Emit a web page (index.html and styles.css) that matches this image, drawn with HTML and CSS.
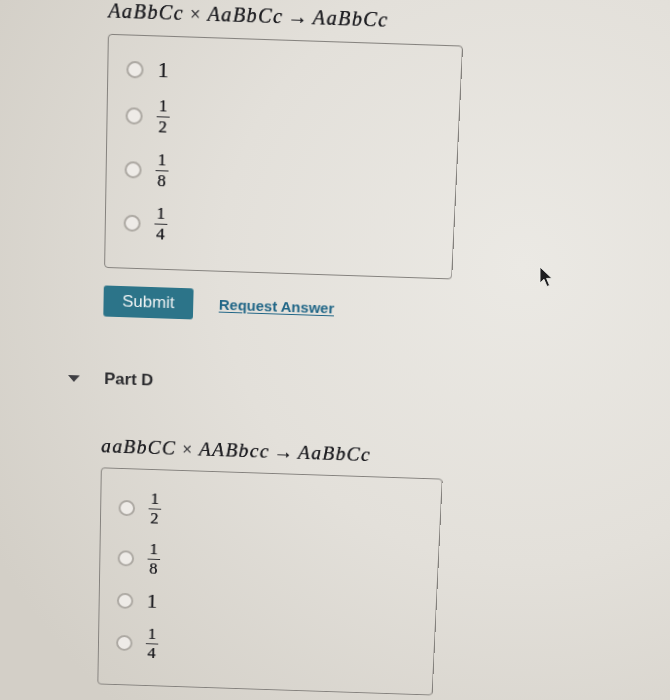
FILE: index.html
```html
<!DOCTYPE html>
<html lang="en">
  <head>
    <meta charset="utf-8" />
    <meta name="viewport" content="width=device-width, initial-scale=1.0" />
    <title>Part C / Part D</title>
    <link rel="stylesheet" href="styles.css">
  </head>
  <body>
    <div class="screen">

      <!-- Part C (open, header scrolled away) -->
      <div class="question">
        <p class="cross"><span class="gt">AaBbCc</span><span class="op">×</span><span class="gt">AaBbCc</span><span class="arrow">→</span><span class="gt">AaBbCc</span></p>

        <div class="choices">
          <label class="choice">
            <input type="radio" name="part_c" class="radio">
            <span class="num">1</span>
          </label>
          <label class="choice tall">
            <input type="radio" name="part_c" class="radio">
            <span class="frac"><span class="top">1</span><span class="bot">2</span></span>
          </label>
          <label class="choice tall">
            <input type="radio" name="part_c" class="radio">
            <span class="frac"><span class="top">1</span><span class="bot">8</span></span>
          </label>
          <label class="choice tall">
            <input type="radio" name="part_c" class="radio">
            <span class="frac"><span class="top">1</span><span class="bot">4</span></span>
          </label>
        </div>

        <div class="actions">
          <button class="submit" type="button">Submit</button>
          <a class="request" href="#">Request Answer</a>
        </div>
      </div>

      <!-- Part D -->
      <div class="part">
        <h2 class="part-title"><span class="caret"></span>Part D</h2>

        <div class="question">
          <p class="cross"><span class="gt">aaBbCC</span><span class="op">×</span><span class="gt">AABbcc</span><span class="arrow">→</span><span class="gt">AaBbCc</span></p>

          <div class="choices">
            <label class="choice tall">
              <input type="radio" name="part_d" class="radio">
              <span class="frac"><span class="top">1</span><span class="bot">2</span></span>
            </label>
            <label class="choice tall">
              <input type="radio" name="part_d" class="radio">
              <span class="frac"><span class="top">1</span><span class="bot">8</span></span>
            </label>
            <label class="choice">
              <input type="radio" name="part_d" class="radio">
              <span class="num">1</span>
            </label>
            <label class="choice tall">
              <input type="radio" name="part_d" class="radio">
              <span class="frac"><span class="top">1</span><span class="bot">4</span></span>
            </label>
          </div>

          <!-- only the top edge of this button is on screen -->
          <div class="actions">
            <button class="submit" type="button" aria-label="Submit"></button>
          </div>
        </div>
      </div>

    </div>

    <!-- mouse pointer -->
    <svg class="pointer" width="14" height="22" viewBox="0 0 14 22">
      <path d="M1 1 L1 17 L5 13.3 L8 20.5 L10.6 19.4 L7.6 12.4 L13 12.4 Z" fill="#1d1d1f" stroke="#eeeeea" stroke-width="0.9" stroke-linejoin="round"/>
    </svg>
  </body>
</html>
```

FILE: styles.css
```css
html, body {
    margin: 0;
    height: 700px;
    overflow: hidden;
}

body {
    position: relative;
    background: radial-gradient(ellipse 90% 85% at 78% 38%, #ebe9e4 0%, #e3e0da 50%, #d3cfc7 100%);
    font-family: "Liberation Sans", Arial, sans-serif;
    color: #1f1f23;
}

/* the monitor is seen slightly from above and tilted */
.screen {
    width: 670px;
    box-sizing: border-box;
    padding: 8px 0 0 106px;
    transform-origin: 300px 150px;
    transform: rotate(1.9deg) perspective(800px) rotateX(-4deg);
}

.cross {
    margin: 0 0 12px;
    font: italic 20px/20px "Liberation Serif", "Times New Roman", serif;
    color: #1c1c20;
    white-space: nowrap;
    text-shadow: 0 0 0.6px #1c1c20;
}

.cross .gt {
    letter-spacing: 1.4px;
}

.cross .op {
    font-style: normal;
    font-size: 18px;
    margin: 0 7px 0 6px;
    color: #3a3a3e;
}

.cross .arrow {
    font-style: normal;
    margin: 0 5px 0 4px;
}

.choices {
    width: 352px;
    box-sizing: border-box;
    display: flex;
    flex-direction: column;
    gap: 10px;
    padding: 19px 0 24px 18px;
    border: 1px solid #84817d;
    border-radius: 4px;
}

.choice {
    display: flex;
    align-items: center;
    gap: 14px;
    height: 28px;
}

.choice.tall {
    height: 44px;
}

.radio {
    appearance: none;
    -webkit-appearance: none;
    margin: 0;
    width: 17px;
    height: 17px;
    box-sizing: border-box;
    border: 2px solid #aca8a2;
    border-radius: 50%;
    background: #eeebe7;
}

.num {
    font: 22px/1 "Liberation Serif", "Times New Roman", serif;
    color: #1c1c20;
    text-shadow: 0 0 0.6px #1c1c20;
}

.frac {
    display: inline-flex;
    flex-direction: column;
    align-items: center;
    font: 17px/14px "Liberation Serif", "Times New Roman", serif;
    color: #1c1c20;
    text-shadow: 0 0 0.5px #1c1c20;
}

.frac .top {
    padding: 0 2px 3px;
    border-bottom: 1px solid #2c2c30;
}

.frac .bot {
    padding-top: 3px;
}

.actions {
    display: flex;
    align-items: baseline;
    margin-top: 18px;
}

.submit {
    height: 32px;
    min-width: 91px;
    padding: 0 19px;
    border: 0;
    border-radius: 3px;
    background: #2c7489;
    color: #eef2f3;
    font: 17px "Liberation Sans", Arial, sans-serif;
}

.request {
    margin-left: 26px;
    font: bold 15px "Liberation Sans", Arial, sans-serif;
    color: #1f6586;
    text-decoration: underline;
    text-underline-offset: 2px;
}

.part-title {
    display: flex;
    align-items: center;
    margin: 53px 0 0 -35px;
    font: bold 17px/24px "Liberation Sans", Arial, sans-serif;
    color: #2c2c2f;
}

.caret {
    width: 0;
    height: 0;
    margin-right: 25px;
    border-left: 6px solid transparent;
    border-right: 6px solid transparent;
    border-top: 7px solid #3f3f43;
}

.part .cross {
    margin-top: 48px;
}

.pointer {
    position: absolute;
    left: 539px;
    top: 266px;
}
```
